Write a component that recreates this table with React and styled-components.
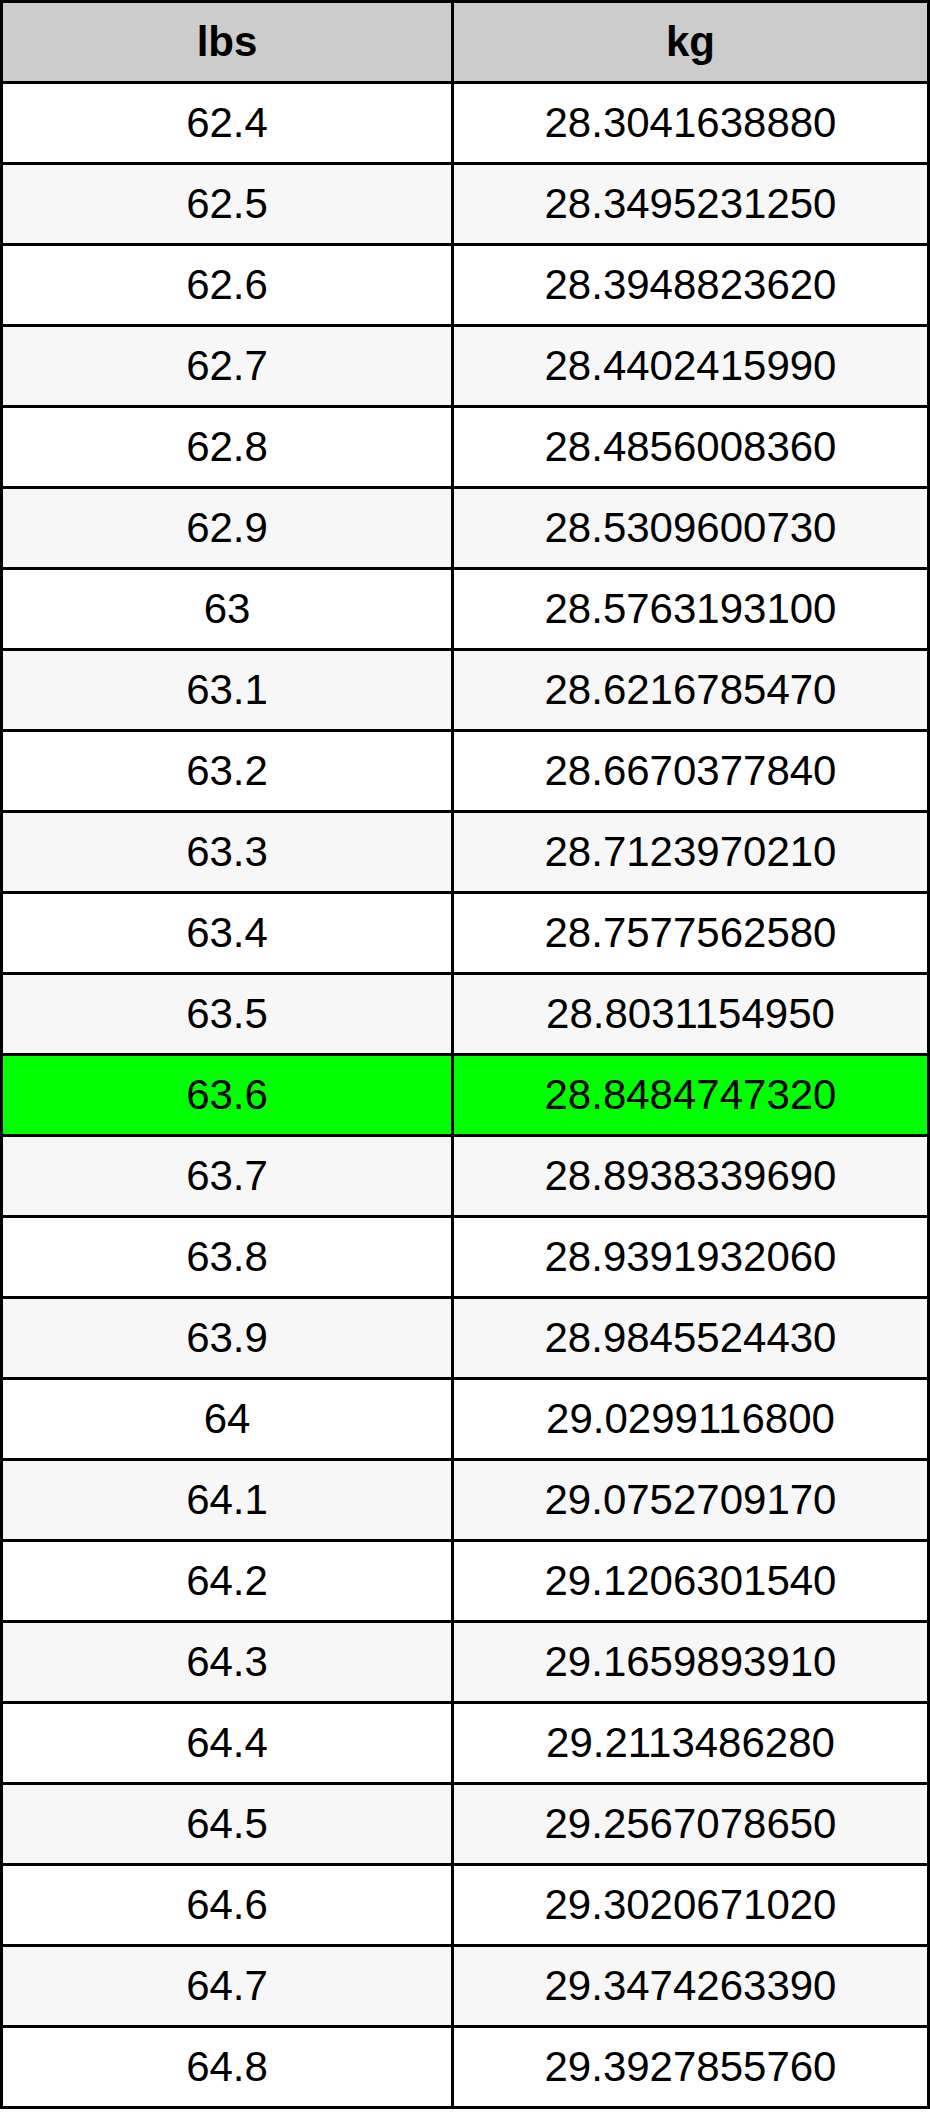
import styled, { createGlobalStyle } from 'styled-components';

const GlobalStyle = createGlobalStyle`
  body {
    margin: 0;
    background: #ffffff;
    font-family: 'Liberation Sans', Arial, sans-serif;
  }
`;

const Table = styled.table`
  width: 930px;
  border-collapse: collapse;
  border: 3px solid #000;
  font-family: 'Liberation Sans', Arial, sans-serif;
  font-size: 42px;
  color: #000;
`;

const HeadCell = styled.th`
  height: 78px;
  padding: 0;
  border: 3px solid #000;
  background-color: #cccccc;
  font-weight: 700;
  text-align: center;
`;

const Row = styled.tr`
  background-color: ${({ $highlight, $striped }) =>
    $highlight ? '#00ff00' : $striped ? '#f7f7f7' : '#ffffff'};
`;

const Cell = styled.td`
  height: 78px;
  padding: 0;
  border: 3px solid #000;
  text-align: center;
  width: ${({ $left }) => ($left ? '448px' : 'auto')};
`;

const rows = [
  ['62.4', '28.3041638880'],
  ['62.5', '28.3495231250'],
  ['62.6', '28.3948823620'],
  ['62.7', '28.4402415990'],
  ['62.8', '28.4856008360'],
  ['62.9', '28.5309600730'],
  ['63', '28.5763193100'],
  ['63.1', '28.6216785470'],
  ['63.2', '28.6670377840'],
  ['63.3', '28.7123970210'],
  ['63.4', '28.7577562580'],
  ['63.5', '28.8031154950'],
  ['63.6', '28.8484747320'],
  ['63.7', '28.8938339690'],
  ['63.8', '28.9391932060'],
  ['63.9', '28.9845524430'],
  ['64', '29.0299116800'],
  ['64.1', '29.0752709170'],
  ['64.2', '29.1206301540'],
  ['64.3', '29.1659893910'],
  ['64.4', '29.2113486280'],
  ['64.5', '29.2567078650'],
  ['64.6', '29.3020671020'],
  ['64.7', '29.3474263390'],
  ['64.8', '29.3927855760'],
];

export default function App() {
  return (
    <>
      <GlobalStyle />
      <Table>
        <thead>
          <tr>
            <HeadCell>lbs</HeadCell>
            <HeadCell>kg</HeadCell>
          </tr>
        </thead>
        <tbody>
          {rows.map(([lbs, kg], i) => (
            <Row key={lbs} $striped={i % 2 === 1} $highlight={lbs === '63.6'}>
              <Cell $left>{lbs}</Cell>
              <Cell>{kg}</Cell>
            </Row>
          ))}
        </tbody>
      </Table>
    </>
  );
}
